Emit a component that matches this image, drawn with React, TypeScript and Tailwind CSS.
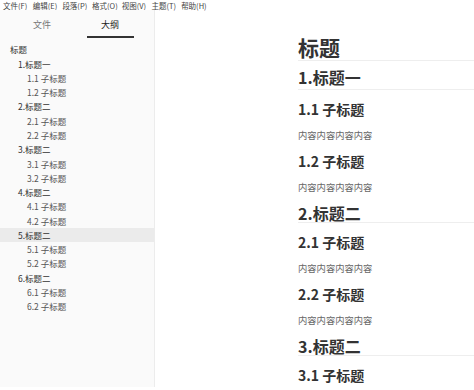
const menus = ["文件(F)", "编辑(E)", "段落(P)", "格式(O)", "视图(V)", "主题(T)", "帮助(H)"];

type Item = { text: string; level: number; active?: boolean };

const outline: Item[] = [
  { text: "标题", level: 0 },
  { text: "1.标题一", level: 1 },
  { text: "1.1 子标题", level: 2 },
  { text: "1.2 子标题", level: 2 },
  { text: "2.标题二", level: 1 },
  { text: "2.1 子标题", level: 2 },
  { text: "2.2 子标题", level: 2 },
  { text: "3.标题二", level: 1 },
  { text: "3.1 子标题", level: 2 },
  { text: "3.2 子标题", level: 2 },
  { text: "4.标题二", level: 1 },
  { text: "4.1 子标题", level: 2 },
  { text: "4.2 子标题", level: 2 },
  { text: "5.标题二", level: 1, active: true },
  { text: "5.1 子标题", level: 2 },
  { text: "5.2 子标题", level: 2 },
  { text: "6.标题二", level: 1 },
  { text: "6.1 子标题", level: 2 },
  { text: "6.2 子标题", level: 2 },
];

const indent = ["pl-[10px]", "pl-[18px]", "pl-[27px]"];

const H3 = ({ children, first }: { children: string; first?: boolean }) => (
  <div className={`h-[26px] leading-[26px] text-[14px] font-bold text-[#333] ${first ? "mt-[6px]" : ""}`}>
    {children}
  </div>
);

const P = () => (
  <div className="h-[26px] leading-[26px] text-[9.3px] text-[#666]">内容内容内容内容</div>
);

const App = () => {
  return (
    <div
      className="w-[474px] h-[390px] overflow-hidden bg-white flex flex-col"
      style={{ fontFamily: '"Noto Sans CJK SC", "Noto Sans", sans-serif' }}
    >
      <div className="h-[10px] flex items-center text-[7.5px] leading-[10px] text-[#444] pl-[3px] pt-[1px]">
        {menus.map((m) => (
          <span key={m} className="w-[29.7px] shrink-0 whitespace-nowrap">{m}</span>
        ))}
      </div>

      <div className="flex flex-1 min-h-0">
        <div className="w-[155px] shrink-0 bg-[#fafafa] border-r border-[#ececec] mb-[3px]">
          <div className="h-[32.4px] flex pl-[8px] pt-[5px]">
            <div className="w-[68px] flex justify-center pt-[3px] text-[9px] text-[#777]">文件</div>
            <div className="w-[68px] flex flex-col items-center pt-[3px]">
              <span className="text-[9px] text-[#222] leading-[14px]">大纲</span>
              <span className="mt-[4px] w-[47px] h-[2px] bg-[#333]" />
            </div>
          </div>
          <div>
            {outline.map((it) => (
              <div
                key={it.text}
                className={`h-[14.27px] leading-[14.27px] text-[8.5px] whitespace-nowrap ${indent[it.level]} ${
                  it.active ? "bg-[#ebebeb]" : ""
                } ${it.level === 2 ? "text-[#555]" : "text-[#333]"}`}
              >
                {it.text}
              </div>
            ))}
          </div>
        </div>

        <div className="flex-1 pl-[143px] pt-[24px]">
          <div className="h-[27px] leading-[26px] text-[21px] font-bold text-[#333] border-b border-[#eee]">标题</div>
          <div className="pt-[5px] leading-[23px] text-[16px] font-bold text-[#333] border-b border-[#eee]">1.标题一</div>
          <H3 first>1.1 子标题</H3>
          <P />
          <H3>1.2 子标题</H3>
          <P />
          <div className="pt-[5px] leading-[17px] text-[16px] font-bold text-[#333] border-b border-[#eee]">2.标题二</div>
          <H3 first>2.1 子标题</H3>
          <P />
          <H3>2.2 子标题</H3>
          <P />
          <div className="pt-[5px] leading-[17px] text-[16px] font-bold text-[#333] border-b border-[#eee]">3.标题二</div>
          <H3 first>3.1 子标题</H3>
        </div>
      </div>
    </div>
  );
};

export default App;
